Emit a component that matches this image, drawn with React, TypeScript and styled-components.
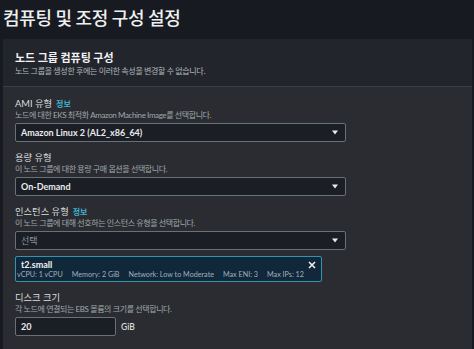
import React from 'react';
import styled, { createGlobalStyle } from 'styled-components';

const GlobalStyle = createGlobalStyle`
  html, body {
    margin: 0;
    padding: 0;
    background: #171a21;
  }
  body {
    font-family: Lato, "Noto Sans CJK KR", "Noto Sans", sans-serif;
    color: #d5dbdb;
    overflow: hidden;
  }
`;

const Page = styled.div`
  width: 474px;
  height: 349px;
  display: flex;
  flex-direction: column;
`;

const PageTitle = styled.h1`
  margin: 0;
  height: 39px;
  padding: 2px 0 0 3px;
  box-sizing: border-box;
  font-family: "Noto Sans CJK KR", sans-serif;
  font-size: 18px;
  font-weight: 500;
  line-height: 30px;
  color: #eef0f0;
  letter-spacing: -0.3px;
`;

const Panel = styled.section`
  margin: 0 2px 0 3px;
  flex: 1;
  background: #2a2c31;
  border-radius: 2px 2px 0 0;
  display: flex;
  flex-direction: column;
`;

const PanelHeader = styled.header`
  height: 48px;
  box-sizing: border-box;
  padding: 10px 12px 0;
  background: #22252c;
  border-bottom: 1px solid #3a3d43;
`;

const PanelTitle = styled.h2`
  margin: 0;
  font-family: "Noto Sans CJK KR", sans-serif;
  font-size: 11px;
  font-weight: 700;
  line-height: 16px;
  color: #f2f3f3;
`;

const PanelSubtitle = styled.p`
  margin: 0;
  font-family: "Noto Sans CJK KR", sans-serif;
  font-size: 8px;
  letter-spacing: -0.3px;
  line-height: 12px;
  color: #b3babd;
`;

const PanelBody = styled.div`
  padding: 11px 12px 0;
  display: flex;
  flex-direction: column;
  gap: 10px;
`;

const Field = styled.div`
  display: flex;
  flex-direction: column;
`;

const Label = styled.div`
  font-family: Lato, "Noto Sans CJK KR", sans-serif;
  font-size: 9.3px;
  line-height: 12px;
  height: 12px;
  color: #d9dede;
  display: flex;
  gap: 4px;
  align-items: baseline;
`;

const InfoLink = styled.span`
  font-size: 8px;
  font-weight: 700;
  color: #3fb2cf;
`;

const Description = styled.div`
  margin-bottom: 2px;
  font-family: Lato, "Noto Sans CJK KR", sans-serif;
  font-size: 8px;
  letter-spacing: -0.4px;
  line-height: 11px;
  height: 11px;
  color: #a0a8ac;
`;

const SelectBox = styled.div<{ $placeholder?: boolean }>`
  width: 331px;
  height: 19px;
  box-sizing: border-box;
  border: 1px solid #687078;
  border-radius: 2px;
  background: #1b1e25;
  display: flex;
  align-items: center;
  justify-content: space-between;
  padding: 0 7px 0 5px;
  font-family: Lato, "Noto Sans CJK KR", sans-serif;
  font-size: 9px;
  font-weight: ${(p) => (p.$placeholder ? 400 : 700)};
  color: ${(p) => (p.$placeholder ? '#8d969b' : '#e9ebed')};
`;

const Caret = () => (
  <svg width="6" height="5" viewBox="0 0 6 5">
    <path d="M0 0.5 L6 0.5 L3 4.5 Z" fill="#e9ebed" />
  </svg>
);

const Token = styled.div`
  margin-top: 6px;
  width: 307px;
  height: 26px;
  box-sizing: border-box;
  border: 1px solid #3295ab;
  border-radius: 2px;
  background: #10283a;
  padding: 2px 0 0 1px;
  position: relative;
`;

const TokenName = styled.div`
  padding-left: 4px;
  font-size: 9px;
  font-weight: 700;
  line-height: 11px;
  color: #f2f3f3;
`;

const TokenTags = styled.div`
  display: flex;
  gap: 9px;
  font-size: 7.2px;
  line-height: 10px;
  color: #9fb2bd;
  white-space: nowrap;
`;

const RemoveButton = styled.span`
  position: absolute;
  right: 5px;
  top: 4px;
  display: flex;
`;

const InputRow = styled.div`
  display: flex;
  align-items: center;
  gap: 5px;
`;

const NumberInput = styled.div`
  width: 101px;
  height: 19px;
  box-sizing: border-box;
  border: 1px solid #687078;
  border-radius: 2px;
  background: #1b1e25;
  padding: 0 5px;
  display: flex;
  align-items: center;
  font-size: 9px;
  font-weight: 700;
  color: #e9ebed;
`;

const Unit = styled.span`
  font-size: 8.5px;
  font-weight: 600;
  color: #d5dbdb;
`;

const tags = [
  'vCPU: 1 vCPU',
  'Memory: 2 GiB',
  'Network: Low to Moderate',
  'Max ENI: 3',
  'Max IPs: 12',
];

export default function App() {
  return (
    <>
      <GlobalStyle />
      <Page>
        <PageTitle>컴퓨팅 및 조정 구성 설정</PageTitle>
        <Panel>
          <PanelHeader>
            <PanelTitle>노드 그룹 컴퓨팅 구성</PanelTitle>
            <PanelSubtitle>노드 그룹을 생성한 후에는 이러한 속성을 변경할 수 없습니다.</PanelSubtitle>
          </PanelHeader>
          <PanelBody>
            <Field>
              <Label>
                AMI 유형 <InfoLink>정보</InfoLink>
              </Label>
              <Description>노드에 대한 EKS 최적화 Amazon Machine Image를 선택합니다.</Description>
              <SelectBox>
                Amazon Linux 2 (AL2_x86_64)
                <Caret />
              </SelectBox>
            </Field>

            <Field>
              <Label>용량 유형</Label>
              <Description>이 노드 그룹에 대한 용량 구매 옵션을 선택합니다.</Description>
              <SelectBox>
                On-Demand
                <Caret />
              </SelectBox>
            </Field>

            <Field>
              <Label>
                인스턴스 유형 <InfoLink>정보</InfoLink>
              </Label>
              <Description>이 노드 그룹에 대해 선호하는 인스턴스 유형을 선택합니다.</Description>
              <SelectBox $placeholder>
                선택
                <Caret />
              </SelectBox>
              <Token>
                <TokenName>t2.small</TokenName>
                <TokenTags>
                  {tags.map((t) => (
                    <span key={t}>{t}</span>
                  ))}
                </TokenTags>
                <RemoveButton>
                  <svg width="8" height="8" viewBox="0 0 8 8">
                    <path d="M1 1 L7 7 M7 1 L1 7" stroke="#f2f3f3" strokeWidth="1.5" />
                  </svg>
                </RemoveButton>
              </Token>
            </Field>

            <Field>
              <Label>디스크 크기</Label>
              <Description>각 노드에 연결되는 EBS 볼륨의 크기를 선택합니다.</Description>
              <InputRow>
                <NumberInput>20</NumberInput>
                <Unit>GiB</Unit>
              </InputRow>
            </Field>
          </PanelBody>
        </Panel>
      </Page>
    </>
  );
}
